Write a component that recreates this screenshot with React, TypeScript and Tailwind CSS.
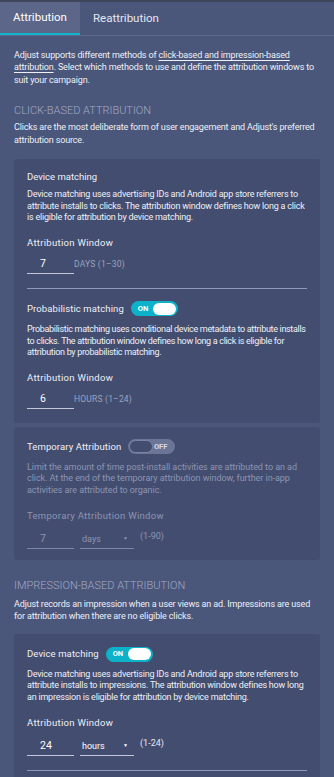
import React from "react";

const font = { fontFamily: "Roboto, 'Noto Sans', sans-serif" };

const Toggle = ({ on }: { on: boolean }) =>
  on ? (
    <div className="flex items-center w-[47px] h-[15px] rounded-full bg-[#0cb2c9] pl-[7px] pr-[2px] justify-between">
      <span className="text-[7.5px] font-bold text-white">ON</span>
      <span className="w-[23px] h-[12px] rounded-full bg-white" />
    </div>
  ) : (
    <div className="flex items-center w-[47px] h-[15px] rounded-full bg-[#6b7596] pl-[1px] pr-[8px] justify-between">
      <span className="w-[24px] h-[13px] rounded-full bg-[#434d70] border border-[#7a84a3]" />
      <span className="text-[7.5px] font-bold text-[#d6dae6]">OFF</span>
    </div>
  );

const NumberInput = ({ value, muted }: { value: string; muted?: boolean }) => (
  <div className={`w-[47px] h-[20px] border-b ${muted ? "border-[#7d86a4]" : "border-[#c3c8d8]"} pl-[13px] flex items-center text-[10.5px] ${muted ? "text-[#8d95b1]" : "text-white"}`}>
    {value}
  </div>
);

const Select = ({ value, muted }: { value: string; muted?: boolean }) => (
  <div className={`w-[54px] h-[20px] ml-[6px] border-b ${muted ? "border-[#7d86a4]" : "border-[#c3c8d8]"} pl-[2px] pr-[6px] flex items-center justify-between text-[9px] ${muted ? "text-[#8d95b1]" : "text-white"}`}>
    <span className="pt-[2px]">{value}</span>
    <span className="text-[5px]">▼</span>
  </div>
);

const Desc = ({ children, muted, top, track = "tracking-[-0.22px]" }: { children: React.ReactNode; muted?: boolean; top: string; track?: string }) => (
  <p className={`${top} text-[9px] leading-[11.7px] ${track} ${muted ? "text-[#8d95b1]" : "text-[#eef0f6]"}`}>{children}</p>
);

const Label = ({ children, muted }: { children: React.ReactNode; muted?: boolean }) => (
  <div className={`mt-[12px] text-[9.5px] tracking-[0.3px] ${muted ? "text-[#8d95b1]" : "text-[#eef0f6]"}`}>{children}</div>
);

export default function App() {
  return (
    <div className="min-h-[777px] w-[334px] bg-[#4b567b] border-t-2 border-[#3e4759] text-[#eef0f6]" style={font}>
      {/* tabs */}
      <div className="flex border-b border-[#5d688c] h-[34px]">
        <div className="w-[80px] bg-[#5b6688] border-b-2 border-[#10b6cc] flex items-center justify-center text-[11.5px] text-white">
          Attribution
        </div>
        <div className="px-[13px] flex items-center text-[11.5px] text-[#e4e7f0]">Reattribution</div>
      </div>

      <div className="px-[14px] pt-[13px] pb-[10px]">
        <p className="text-[9px] leading-[12.3px] tracking-[-0.15px]">
          Adjust supports different methods of{" "}
          <span className="underline underline-offset-2">click-based and impression-based attribution</span>. Select which methods to use and define the attribution windows to suit your campaign.
        </p>

        <h2 className="mt-[17px] text-[11px] font-light text-[#a2aac3]">CLICK-BASED ATTRIBUTION</h2>
        <p className="mt-[2px] text-[9px] leading-[12.3px] tracking-[-0.15px]">
          Clicks are the most deliberate form of user engagement and Adjust's preferred attribution source.
        </p>

        {/* card 1 */}
        <div className="mt-[13px] rounded-[3px] bg-[#434d70] px-[13px] pt-[11px] pb-[14px]">
          <div className="text-[9.5px] leading-[13px]">Device matching</div>
          <Desc top="mt-[6px]">
            Device matching uses advertising IDs and Android app store referrers to attribute installs to clicks. The attribution window defines how long a click is eligible for attribution by device matching.
          </Desc>
          <Label>Attribution Window</Label>
          <div className="mt-[4px] flex items-center">
            <NumberInput value="7" />
            <span className="text-[8.5px] text-[#9ba3be] tracking-[0.2px]">DAYS (1–30)</span>
          </div>
          <div className="mt-[14px] border-t border-[#8f98b6]" />

          <div className="mt-[12px] flex items-center gap-[7px]">
            <span className="text-[9.5px] tracking-[0.1px]">Probabilistic matching</span>
            <Toggle on />
          </div>
          <Desc top="mt-[7.5px]" track="tracking-[-0.32px]">
            Probabilistic matching uses conditional device metadata to attribute installs to clicks. The attribution window defines how long a click is eligible for attribution by probabilistic matching.
          </Desc>
          <Label>Attribution Window</Label>
          <div className="mt-[4px] flex items-center">
            <NumberInput value="6" />
            <span className="text-[8.5px] text-[#9ba3be] tracking-[0.2px]">HOURS (1–24)</span>
          </div>
        </div>

        {/* card 2 */}
        <div className="mt-[4px] rounded-[3px] bg-[#434d70] px-[13px] pt-[12px] pb-[11px]">
          <div className="flex items-center gap-[7px]">
            <span className="text-[9.5px] tracking-[0.1px]">Temporary Attribution</span>
            <Toggle on={false} />
          </div>
          <Desc muted top="mt-[7.5px]" track="tracking-[-0.05px]">
            Limit the amount of time post-install activities are attributed to an ad click. At the end of the temporary attribution window, further in-app activities are attributed to organic.
          </Desc>
          <Label muted>Temporary Attribution Window</Label>
          <div className="mt-[6px] flex items-center">
            <NumberInput value="7" muted />
            <Select value="days" muted />
            <span className="ml-[6px] mb-[4px] text-[9px] text-[#8d95b1]">(1-90)</span>
          </div>
        </div>

        <h2 className="mt-[18px] text-[11px] font-light text-[#a2aac3]">IMPRESSION-BASED ATTRIBUTION</h2>
        <p className="mt-[3px] text-[9px] leading-[12px] tracking-[-0.15px]">
          Adjust records an impression when a user views an ad. Impressions are used for attribution when there are no eligible clicks.
        </p>

        {/* card 3 */}
        <div className="mt-[12px] rounded-[3px] bg-[#434d70] px-[13px] pt-[13px] pb-[12px]">
          <div className="flex items-center gap-[7px]">
            <span className="text-[9.5px] tracking-[0.1px]">Device matching</span>
            <Toggle on />
          </div>
          <Desc top="mt-[7px]">
            Device matching uses advertising IDs and Android app store referrers to attribute installs to impressions. The attribution window defines how long an impression is eligible for attribution by device matching.
          </Desc>
          <Label>Attribution Window</Label>
          <div className="mt-[6px] flex items-center">
            <NumberInput value="24" />
            <Select value="hours" />
            <span className="ml-[6px] mb-[4px] text-[9px] text-[#e4e7f0]">(1-24)</span>
          </div>
          <div className="mt-[14px] border-t border-[#8f98b6]" />
        </div>
      </div>
    </div>
  );
}
